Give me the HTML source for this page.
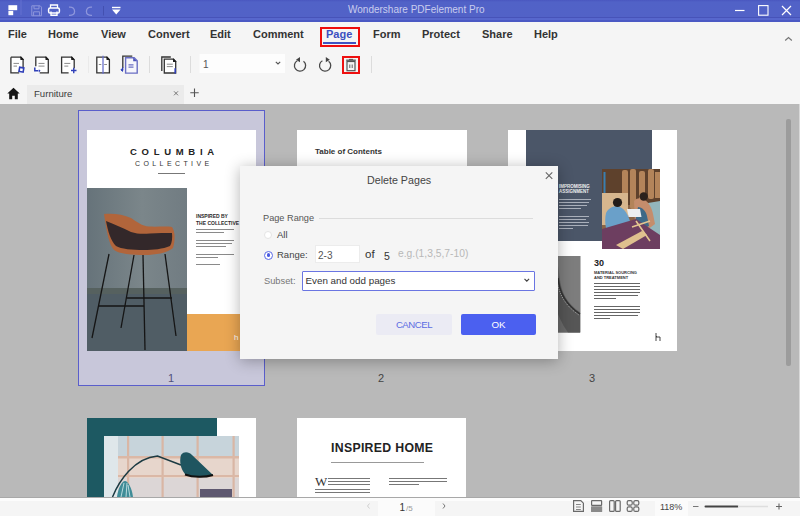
<!DOCTYPE html>
<html><head><meta charset="utf-8">
<style>
*{box-sizing:border-box;margin:0;padding:0}
html,body{width:800px;height:516px;overflow:hidden;background:#f5f5f5;font-family:"Liberation Sans",sans-serif}
.a{position:absolute}
#title{left:0;top:0;width:800px;height:22px;background:linear-gradient(#4a57c0 0,#5162c7 2px,#5262c7 17px,#4753b9 17px,#4753b9 18px,#5767cd 18px,#5767cd 20px,#4b59c4 20px,#4b59c4 21.6px,#f5f5f5 21.6px)}
#menu{left:0;top:22px;width:800px;height:60px;background:#f5f5f5}
.mi{position:absolute;top:28px;font-size:11px;font-weight:bold;color:#333;line-height:12px;white-space:nowrap}
#tabbar{left:0;top:82px;width:800px;height:22px;background:#f5f5f5}
#main{left:0;top:104px;width:800px;height:393px;background:#b9b9b9;overflow:hidden}
#status{left:0;top:497px;width:800px;height:19px;background:#f5f5f5}
.page{position:absolute;background:#fff;overflow:hidden}
.lbl{position:absolute;font-size:11px;color:#444;line-height:12px}
</style></head><body>

<!-- TITLE BAR -->
<div id="title" class="a">
  <div class="a" style="left:348px;top:4px;font-size:10px;color:#c9cdee;line-height:12px;white-space:nowrap">Wondershare PDFelement Pro</div>
  <svg class="a" style="left:0;top:0" width="130" height="22" viewBox="0 0 130 22">
    <rect x="8.4" y="5.2" width="8.8" height="5" fill="#fff"/>
    <rect x="8.4" y="10.9" width="4.8" height="4.3" fill="#fff"/>
    <line x1="21" y1="0" x2="21" y2="15" stroke="#6570d0" stroke-width="1"/>
    <path d="M31.8 5.8h8.4l1.3 1.3v8.7h-9.7z M34 5.8v3h5v-3 M33.6 15.8v-4h6v4" fill="none" stroke="#8e96dc" stroke-width="1"/>
    <path d="M50.5 8v-3h7v3" fill="none" stroke="#fff" stroke-width="1.3"/>
    <rect x="48.6" y="8" width="10.8" height="5" rx="1.6" fill="none" stroke="#fff" stroke-width="1.5"/>
    <path d="M51 11.5v3.8h6v-3.8" fill="none" stroke="#fff" stroke-width="1.4"/>
    <path d="M69 7.2c3.5 -0.5 5.6 1.5 5.6 4.2s-2.1 4.2 -5.6 4" fill="none" stroke="#8e96dc" stroke-width="1.3"/>
    <path d="M92 7.2c-3.5 -0.5 -5.6 1.5 -5.6 4.2s2.1 4.2 5.6 4" fill="none" stroke="#8e96dc" stroke-width="1.3"/>
    <line x1="103.5" y1="6" x2="103.5" y2="15.5" stroke="#4350b0" stroke-width="1"/>
    <rect x="112" y="6.8" width="8.5" height="1.4" fill="#fff"/>
    <path d="M112 9.5h8.5l-4.25 5z" fill="#fff"/>
  </svg>
  <svg class="a" style="left:720px;top:0" width="80" height="22" viewBox="0 0 80 22">
    <line x1="15" y1="10.5" x2="24.5" y2="10.5" stroke="#fff" stroke-width="1.2"/>
    <rect x="38.6" y="5.6" width="9.4" height="9.6" fill="none" stroke="#fff" stroke-width="1.1"/>
    <path d="M62 6l9 9M71 6l-9 9" stroke="#fff" stroke-width="1.2"/>
  </svg>
</div>

<!-- MENU + TOOLBAR -->
<div id="menu" class="a"></div>
<div class="mi" style="left:8px">File</div>
<div class="mi" style="left:48px">Home</div>
<div class="mi" style="left:101px">View</div>
<div class="mi" style="left:148px">Convert</div>
<div class="mi" style="left:210px">Edit</div>
<div class="mi" style="left:253px">Comment</div>
<div class="mi" style="left:326px;color:#3c4fc0">Page</div>
<div class="a" style="left:323px;top:42px;width:33px;height:2px;background:#3f52c2"></div>
<div class="a" style="left:320px;top:27px;width:40px;height:20px;border:2px solid #ee0d0d"></div>
<div class="mi" style="left:373px">Form</div>
<div class="mi" style="left:422px">Protect</div>
<div class="mi" style="left:482px">Share</div>
<div class="mi" style="left:534px">Help</div>

<!-- TOOLBAR ICONS -->
<svg class="a" style="left:0;top:47px" width="380" height="35" viewBox="0 0 380 35">
  <g fill="#fff">
    <rect x="10.9" y="10.2" width="12.2" height="15.7"/>
    <rect x="35.8" y="10.2" width="12.5" height="15.7"/>
    <rect x="61.6" y="10.2" width="12.6" height="15.7"/>
    <rect x="96.8" y="10.2" width="12.6" height="15.7"/>
    <rect x="164.3" y="12.2" width="11.4" height="13.8"/>
  </g>
  <g fill="none" stroke="#333" stroke-width="1.3">
    <!-- icon1 -->
    <path d="M10.9 10.2h9.6l2.6 2.6v8.2 M19.2 25.9h-8.3v-15.7"/>
    <!-- icon2 -->
    <path d="M35.8 19.2v-9h9.8l2.7 2.7v13h-8.6"/>
    <!-- icon3 -->
    <path d="M68.6 25.9h-7v-15.7h9.8l2.8 2.8v8.2"/>
    <!-- icon4 -->
    <path d="M96.8 10.2h9.8l2.8 2.8v12.9h-12.6z"/>
    <!-- icon6 -->
    <path d="M161.8 24v-14h9" />
    <path d="M164.3 12.2h8.8l2.6 2.6v11.2h-11.4z"/>
  </g>
  <g fill="#1e1e1e">
    <path d="M20.4 9.6h0.8l2.6 2.6v0.9h-3.4z"/>
    <path d="M45.5 9.6h0.8l2.6 2.6v0.9h-3.4z"/>
    <path d="M71.2 9.6h0.8l2.6 2.6v0.9h-3.4z"/>
    <path d="M106.5 9.6h0.8l2.6 2.6v0.9h-3.4z"/>
    <path d="M173 11.6h0.8l2.6 2.6v0.9h-3.4z"/>
  </g>
  <g stroke="#8a8a8a" stroke-width="1">
    <path d="M13.5 16.4h5.5M13.5 19.1h3.5"/>
    <path d="M38.5 16.4h6M38.5 19.1h6"/>
    <path d="M64.3 16.4h6M64.3 19.1h4"/>
    <path d="M98.8 17.5h2.5M104.2 17.5h2.8"/>
    <path d="M166.8 17.2h6M166.8 19.6h6"/>
  </g>
  <!-- blue accents -->
  <g fill="none" stroke="#2f3fb8" stroke-width="1.6">
    <rect x="19.3" y="20.6" width="4.2" height="4.2" transform="rotate(10 21.4 22.7)"/>
    <path d="M71 23.5h5.5M73.75 20.8v5.5" stroke-width="1.4"/>
    <path d="M34.8 20.6v3.2h3.6" stroke-width="1.5"/>
  </g>
  <path d="M38.8 22.2l1.8 1.6l-1.8 1.6z" fill="#2f3fb8"/>
  <line x1="103" y1="8.8" x2="103" y2="27" stroke="#6a72cc" stroke-width="1.3"/>
  <!-- icon5 -->
  <path d="M122.8 21v-11.8h9.5" fill="none" stroke="#333" stroke-width="1.3"/>
  <path d="M125.6 10.8h8.6l3 3v12.3h-11.6z" fill="#f6f6fb" stroke="#6a6fc4" stroke-width="1.4"/>
  <path d="M133.2 10.5l3.8 3.8h-3.8z" fill="#4a52b8"/>
  <path d="M128.5 17.8h5M128.5 20.2h5" stroke="#6a6fc4" stroke-width="1.2"/>
  <path d="M122.8 20.5l-1 3.5" stroke="#2f3fb8" stroke-width="1.4"/>
  <path d="M120.3 22.6l2.6 2.4l0.6-3.2z" fill="#2f3fb8"/>
  <!-- icon6 blue 1 -->
  <path d="M175.2 21.2v5.2" stroke="#2f3fb8" stroke-width="1.6"/>
  <!-- separators -->
  <g stroke="#dcdcdc" stroke-width="1">
    <line x1="88.5" y1="9" x2="88.5" y2="26" stroke="#eaeaea"/>
    <line x1="149.5" y1="9" x2="149.5" y2="26"/>
    <line x1="190.5" y1="9" x2="190.5" y2="26"/>
    <line x1="371.5" y1="9" x2="371.5" y2="26"/>
  </g>
  <!-- dropdown -->
  <rect x="199.5" y="7" width="85.5" height="19" fill="#fdfdfd"/>
  <path d="M275.8 14.8l2.2 2.2l2.2-2.2" fill="none" stroke="#555" stroke-width="1.1"/>
  <!-- rotate ccw -->
  <g fill="none" stroke="#4a4a4a" stroke-width="1.3">
    <path d="M297.3 13.7 A5.6 5.6 0 1 0 303.5 14.2"/>
    <path d="M328.6 14.2 A5.6 5.6 0 1 1 322.4 13.7"/>
  </g>
  <path d="M296 12.8l4 -2.8v5.2z" fill="#444"/>
  <path d="M329.8 12.8l-4 -2.8v5.2z" fill="#444"/>
  <!-- delete -->
  <rect x="343" y="10" width="16" height="16" fill="none" stroke="#ee1010" stroke-width="2"/>
  <path d="M346.2 13.2h9.6" stroke="#555" stroke-width="1.3"/>
  <path d="M349 12.4h4" stroke="#555" stroke-width="1"/>
  <rect x="347" y="14.5" width="8" height="9.2" fill="none" stroke="#555" stroke-width="1.2"/>
  <path d="M349.8 17.5v3.5M352.2 17.5v3.5" stroke="#555" stroke-width="0.9"/>
</svg>
<div class="a" style="left:203px;top:58.5px;font-size:10px;color:#555;line-height:12px">1</div>
<svg class="a" style="left:780px;top:34px" width="16" height="10" viewBox="0 0 16 10">
  <path d="M5.2 6.5l3.3-3l3.3 3" fill="none" stroke="#777" stroke-width="1.2"/>
</svg>

<!-- TAB BAR -->
<div id="tabbar" class="a">
  <div class="a" style="left:27px;top:3px;width:157px;height:19px;background:#ebebeb"></div>
  <div class="a" style="left:34px;top:6.3px;font-size:9.6px;color:#3c3c3c;line-height:12px">Furniture</div>
  <svg class="a" style="left:0;top:0" width="210" height="22" viewBox="0 0 210 22">
    <path d="M13.5 5.8L7.3 11.6h1.9v5.6h3v-3.4h2.6v3.4h3v-5.6h1.9z" fill="#141414"/>
    <path d="M174 9.3l4 4M178 9.3l-4 4" stroke="#777" stroke-width="1"/>
    <path d="M194.5 6.6v8.4M190.3 10.8h8.4" stroke="#555" stroke-width="1.1"/>
  </svg>
</div>

<!-- MAIN -->
<div id="main" class="a">
  <div class="a" style="left:78px;top:6px;width:187px;height:276px;background:#c8c7da;border:1px solid #5a5ecb"></div>
  <div class="lbl" style="left:168px;top:268px;color:#50507a">1</div>
  <div class="lbl" style="left:378px;top:268px">2</div>
  <div class="lbl" style="left:589px;top:268px">3</div>
  <div class="a" style="left:786px;top:15px;width:4.5px;height:247px;background:#9c9c9c;border-radius:2px"></div>
  <div class="a" style="left:799px;top:0;width:1px;height:393px;background:#d8d8d8"></div>
</div>

<!-- PAGE 1 -->
<div class="page" style="left:87px;top:130px;width:169px;height:221px">
  <div class="a" style="left:43px;top:16px;font-size:9.5px;font-weight:bold;letter-spacing:4.7px;color:#222;line-height:11px;white-space:nowrap">COLUMBIA</div>
  <div class="a" style="left:48px;top:30px;font-size:7px;letter-spacing:3.4px;color:#333;line-height:8px;white-space:nowrap">COLLECTIVE</div>
  <div class="a" style="left:71px;top:42.5px;width:27px;height:1.6px;background:#777"></div>
  <svg class="a" style="left:0;top:58px" width="100" height="164" viewBox="0 0 100 164">
    <defs>
      <linearGradient id="wall" x1="0" y1="0" x2="1" y2="0">
        <stop offset="0" stop-color="#66737a"/><stop offset="0.55" stop-color="#7b868a"/><stop offset="1" stop-color="#717c82"/>
      </linearGradient>
    </defs>
    <rect x="0" y="0" width="100" height="164" fill="url(#wall)"/>
    <rect x="0" y="102" width="100" height="62" fill="#505d65"/>
    <rect x="0" y="100" width="100" height="6" fill="#56615f"/>
    <!-- chair shell -->
    <path d="M17 26C25 25 36 26 44 30C50 34 55 38 62 38.5C70 39 80 38 85 39C88 43 88.5 52 86 60C80 65 68 67 58 67C45 67 32 66 27 62C22 56 20 46 17 26z" fill="#b1653b"/>
    <path d="M19 33C27 36 36 40 44 44C50 46 56 46 63 45.5C71 45 79 45 85 45C85.5 50 85 55 83 58C76 61 66 62 57 62C45 62 34 61 29 58C24 53 21 44 19 33z" fill="#33282a"/>
    <!-- legs -->
    <g stroke="#151515" stroke-width="1.3" fill="none">
      <path d="M22 66L5 150"/>
      <path d="M47 67L34 140"/>
      <path d="M56 67L58 162"/>
      <path d="M78 66L89 148"/>
      <path d="M12 118H57"/>
      <path d="M40 110H85"/>
    </g>
  </svg>
  <div class="a" style="left:109px;top:83px;font-size:5px;font-weight:bold;color:#2a2a2a;line-height:7px;white-space:nowrap">INSPIRED BY<br>THE COLLECTIVE</div>
  <div class="a" style="left:109px;top:99px;width:38px;height:1px;background:#8a8a8a"></div>
  <div class="a" style="left:109px;top:102px;width:28px;height:1px;background:#8a8a8a"></div>
  <div class="a" style="left:109px;top:110px;width:38px;height:1px;background:#8a8a8a"></div>
  <div class="a" style="left:109px;top:113px;width:36px;height:1px;background:#8a8a8a"></div>
  <div class="a" style="left:109px;top:116px;width:30px;height:1px;background:#8a8a8a"></div>
  <div class="a" style="left:109px;top:124px;width:38px;height:1px;background:#8a8a8a"></div>
  <div class="a" style="left:109px;top:127px;width:22px;height:1px;background:#8a8a8a"></div>
  <div class="a" style="left:109px;top:134px;width:24px;height:1px;background:#8a8a8a"></div>
  <div class="a" style="left:100px;top:184px;width:69px;height:37px;background:#e9a653"></div>
  <div class="a" style="left:147px;top:203px;font-size:8px;color:#fff;line-height:9px">h</div>
</div>

<!-- PAGE 2 -->
<div class="page" style="left:297px;top:130px;width:170px;height:221px">
  <div class="a" style="left:18px;top:16.5px;font-size:8px;font-weight:bold;color:#333;line-height:10px;white-space:nowrap">Table of Contents</div>
</div>

<!-- PAGE 3 -->
<div class="page" style="left:508px;top:130px;width:169px;height:221px">
  <div class="a" style="left:18px;top:0;width:125.5px;height:110.5px;background:#4b5668"></div>
  <div class="a" style="left:51px;top:54px;font-size:4.5px;font-weight:bold;color:#f0f0f0;line-height:5px;white-space:nowrap">IMPROMISING<br>ASSIGNMENT</div>
  <div class="a" style="left:51px;top:69px;width:32px;height:1px;background:#aab0bb"></div>
  <div class="a" style="left:51px;top:72px;width:30px;height:1px;background:#aab0bb"></div>
  <div class="a" style="left:51px;top:75px;width:28px;height:1px;background:#aab0bb"></div>
  <div class="a" style="left:51px;top:78px;width:22px;height:1px;background:#aab0bb"></div>
  <div class="a" style="left:51px;top:86px;width:30px;height:1px;background:#aab0bb"></div>
  <div class="a" style="left:51px;top:89px;width:27px;height:1px;background:#aab0bb"></div>
  <div class="a" style="left:51px;top:92px;width:30px;height:1px;background:#aab0bb"></div>
  <div class="a" style="left:51px;top:95px;width:29px;height:1px;background:#aab0bb"></div>
  <div class="a" style="left:51px;top:98px;width:14px;height:1px;background:#aab0bb"></div>
  <svg class="a" style="left:93.5px;top:38.7px" width="58.5" height="80.5" viewBox="0 0 58.5 80.5">
    <rect width="58.5" height="80.5" rx="2.5" fill="#8a6446"/>
    <rect x="0" y="0" width="58.5" height="36" fill="#5e412c"/>
    <g fill="#b3845a"><rect x="20" y="1" width="6" height="34" rx="2"/><rect x="28" y="0" width="6" height="40" rx="2"/><rect x="37" y="2" width="6" height="34" rx="2"/><rect x="46" y="0" width="6" height="30" rx="2"/><rect x="53" y="3" width="5" height="26"/></g>
    <rect x="1.5" y="3" width="2" height="24" fill="#3a7fb0"/>
    <path d="M0 24h26v32h-26z" fill="#d6b68e"/>
    <path d="M34 36l24-4v46h-24z" fill="#93b6bc"/>
    <path d="M32 32c2-3 7-4 11-1c4 3 7 8 8 14l2 10l-8 6l-12-6z" fill="#c48d6c"/>
    <path d="M36 38c4 0 8 4 9 9l2 10l-8 4l-6-8z" fill="#3e6987"/>
    <circle cx="41.7" cy="27.5" r="4.2" fill="#2a211c"/>
    <path d="M4 44c3-6 9-8 14-6c5 2 8 8 10 14l4 10l-8 6l-16 2c-4-7-6-17-4-26z" fill="#6aa0c9"/>
    <circle cx="15.5" cy="33.5" r="4.6" fill="#231c18"/>
    <path d="M25 40h13l1.5 8h-13z" fill="#eceef0"/>
    <path d="M0 60l34-10l24 16v14.5h-58z" fill="#6d3e60"/>
    <path d="M14 76l26-14l5 4l-24 14z" fill="#dfc08e"/>
    <path d="M34 52l14 20M30 58l18-6" stroke="#e3c590" stroke-width="1.6"/>
  </svg>
  <svg class="a" style="left:18px;top:126px" width="54.5" height="76.5" viewBox="0 0 54.5 76.5">
    <rect width="54.5" height="76.5" fill="#7d7d7d"/>
    <path d="M0 0h30c2 8 3 16 4 24c2 14 8 24 20 32v20.5h-54z" fill="#6a6a6a"/>
    <path d="M33 20c1 14 6 26 21 38v18.5h-12c-6-8-10-18-14-28z" fill="#4a4a4a" opacity="0.6"/>
    <path d="M32 22c1 14 7 26 22 36" fill="none" stroke="#333" stroke-width="1.6"/>
    <path d="M31 22c1 14 7 27 22 37" fill="none" stroke="#d0d0d0" stroke-width="0.7" stroke-dasharray="1 1.2"/>
  </svg>
  <div class="a" style="left:86px;top:128px;font-size:9px;font-weight:bold;color:#222;line-height:10px">30</div>
  <div class="a" style="left:86px;top:140px;font-size:4px;font-weight:bold;color:#333;line-height:5px;white-space:nowrap">MATERIAL SOURCING<br>AND TREATMENT</div>
  <div class="a" style="left:86px;top:153px;width:46px;height:1px;background:#666"></div>
  <div class="a" style="left:86px;top:156px;width:46px;height:1px;background:#666"></div>
  <div class="a" style="left:86px;top:159px;width:46px;height:1px;background:#666"></div>
  <div class="a" style="left:86px;top:162px;width:46px;height:1px;background:#666"></div>
  <div class="a" style="left:86px;top:165px;width:44px;height:1px;background:#666"></div>
  <div class="a" style="left:86px;top:168px;width:22px;height:1px;background:#666"></div>
  <div class="a" style="left:86px;top:176px;width:46px;height:1px;background:#666"></div>
  <div class="a" style="left:86px;top:179px;width:46px;height:1px;background:#666"></div>
  <div class="a" style="left:86px;top:182px;width:46px;height:1px;background:#666"></div>
  <div class="a" style="left:86px;top:185px;width:44px;height:1px;background:#666"></div>
  <div class="a" style="left:86px;top:188px;width:16px;height:1px;background:#666"></div>
  <svg class="a" style="left:146px;top:202px" width="8" height="10" viewBox="0 0 8 10"><path d="M2 1v8M2 5h4v4M2 5l1-1" fill="none" stroke="#333" stroke-width="0.9"/></svg>
</div>

<!-- PAGE 4 -->
<div class="page" style="left:87px;top:418px;width:169px;height:79px">
  <div class="a" style="left:0;top:0;width:130px;height:18px;background:#1d5962"></div>
  <div class="a" style="left:0;top:0;width:17px;height:79px;background:#1d5962"></div>
  <svg class="a" style="left:17px;top:18px" width="135" height="61" viewBox="0 0 135 61">
    <rect width="135" height="61" fill="#e7d6cc"/>
    <rect x="0" y="0" width="14" height="61" fill="#dfe7ea"/>
    <rect x="14" y="0" width="121" height="20" fill="#c7d4db"/>
    <rect x="14" y="42" width="121" height="19" fill="#dcd6d6"/>
    <g fill="#d9b6a4"><rect x="23" y="0" width="2.2" height="61"/><rect x="57.5" y="0" width="2.2" height="61"/><rect x="92.5" y="0" width="2.2" height="61"/><rect x="128.5" y="0" width="2.2" height="61"/></g>
    <rect x="14" y="20" width="121" height="2.5" fill="#dbb8a6"/>
    <rect x="14" y="39" width="121" height="2" fill="#dbb8a6"/>
    <rect x="96" y="53" width="32" height="8" fill="#5e5870"/>
    <path d="M8.5 61C15 45 30 22 53.5 20L77 29" fill="none" stroke="#1b3a42" stroke-width="1.5"/>
    <path d="M77 19c3-4 8-3 11 0l21 20c-8 3-20 3-28-1c-4-5-6-12-4-19z" fill="#1f5560"/>
    <path d="M81 38.5c8 3 20 3 28 0.5" stroke="#111" stroke-width="2" fill="none"/>
    <path d="M13 61c1-9 5-16 8-16c3 0 7 7 8 16z" fill="#3f8c97"/>
    <path d="M17 61l3-14M22 61l1-14M26 61l-2-12" stroke="#d8eef0" stroke-width="0.8"/>
  </svg>
</div>

<!-- PAGE 5 -->
<div class="page" style="left:297px;top:418px;width:169px;height:79px">
  <div class="a" style="left:34px;top:23px;font-size:12.3px;font-weight:bold;letter-spacing:0.3px;color:#222;line-height:14px;white-space:nowrap">INSPIRED HOME</div>
  <div class="a" style="left:34px;top:43.5px;width:93px;height:1.2px;background:#999"></div>
  <div class="a" style="left:18px;top:57px;font-family:'Liberation Serif',serif;font-size:13px;color:#333;line-height:13px">W</div>
  <div class="a" style="left:31px;top:60px;width:42px;height:1.1px;background:#777"></div>
  <div class="a" style="left:31px;top:63px;width:42px;height:1.1px;background:#777"></div>
  <div class="a" style="left:31px;top:66px;width:42px;height:1.1px;background:#777"></div>
  <div class="a" style="left:18px;top:71px;width:55px;height:1.1px;background:#777"></div>
  <div class="a" style="left:18px;top:74px;width:55px;height:1.1px;background:#777"></div>
  <div class="a" style="left:92px;top:60px;width:58px;height:1.1px;background:#777"></div>
  <div class="a" style="left:92px;top:63px;width:58px;height:1.1px;background:#777"></div>
  <div class="a" style="left:92px;top:66px;width:30px;height:1.1px;background:#777"></div>
</div>

<!-- DIALOG -->
<div class="a" style="left:240px;top:166px;width:318px;height:193px;background:#f5f5f5;box-shadow:0 2px 14px rgba(0,0,0,.3)">
  <div class="a" style="left:127px;top:7px;font-size:10.7px;color:#444;line-height:14px;white-space:nowrap">Delete Pages</div>
  <svg class="a" style="left:303px;top:4px" width="12" height="12" viewBox="0 0 12 12"><path d="M2.8 2.3l6.5 6.5M9.3 2.3l-6.5 6.5" stroke="#666" stroke-width="1.1"/></svg>
  <div class="a" style="left:23px;top:46px;font-size:9.2px;color:#555;line-height:12px;white-space:nowrap">Page Range</div>
  <div class="a" style="left:79px;top:52px;width:214px;height:1px;background:#dcdcdc"></div>
  <div class="a" style="left:24px;top:65px;width:8px;height:8px;border-radius:50%;background:#fff;border:1px solid #e4e4e4"></div>
  <div class="a" style="left:37px;top:63px;font-size:9.5px;color:#444;line-height:12px">All</div>
  <div class="a" style="left:24px;top:84.5px;width:9px;height:9px;border-radius:50%;background:#fff;border:1.3px solid #5a6ae6"></div>
  <div class="a" style="left:26.8px;top:87.3px;width:3.4px;height:3.4px;border-radius:50%;background:#4a5ae0"></div>
  <div class="a" style="left:37px;top:83px;font-size:9.5px;color:#444;line-height:12px">Range:</div>
  <div class="a" style="left:75px;top:78.5px;width:45px;height:18px;background:#fff;border:1px solid #ececec"></div>
  <div class="a" style="left:78px;top:84px;font-size:10px;color:#555;line-height:12px">2-3</div>
  <div class="a" style="left:125px;top:80.5px;font-size:11.5px;color:#333;line-height:14px">of</div>
  <div class="a" style="left:144px;top:83.5px;font-size:10.5px;color:#333;line-height:13px">5</div>
  <div class="a" style="left:158px;top:82px;font-size:10.3px;color:#b8b8b8;line-height:12px;white-space:nowrap">e.g.(1,3,5,7-10)</div>
  <div class="a" style="left:24px;top:109px;font-size:9.3px;color:#777;line-height:12px">Subset:</div>
  <div class="a" style="left:62px;top:105px;width:233px;height:20px;background:#fff;border:1px solid #6a75e2;border-radius:1px"></div>
  <div class="a" style="left:65.5px;top:109px;font-size:9.8px;color:#333;line-height:12px;white-space:nowrap">Even and odd pages</div>
  <svg class="a" style="left:282px;top:110px" width="10" height="8" viewBox="0 0 10 8"><path d="M2.5 2.8l2.3 2.3l2.3-2.3" fill="none" stroke="#444" stroke-width="1.2"/></svg>
  <div class="a" style="left:136px;top:148px;width:76px;height:21px;background:#ebebf4;color:#5b6be3;font-size:9.6px;line-height:21px;text-align:center;letter-spacing:-0.45px;border-radius:2px">CANCEL</div>
  <div class="a" style="left:221px;top:148px;width:75px;height:21px;background:#4b60f0;color:#fff;font-size:9.8px;line-height:21px;text-align:center;border-radius:2px">OK</div>
</div>

<!-- STATUS -->
<div id="status" class="a">
  <div class="a" style="left:0;top:0;width:800px;height:1px;background:#a8a8a8"></div>
  <div class="a" style="left:0;top:1px;width:800px;height:3px;background:#fcfcfc"></div>
  <div class="a" style="left:378px;top:3px;width:57px;height:16px;background:#fbfbfb"></div>
  <div class="a" style="left:399.5px;top:5px;font-size:10px;color:#333;line-height:12px">1</div>
  <div class="a" style="left:406px;top:6px;font-size:8px;color:#999;line-height:11px">/5</div>
  <div class="a" style="left:655px;top:3px;width:33px;height:16px;background:#fbfbfb"></div>
  <div class="a" style="left:660px;top:4.5px;font-size:9px;color:#444;line-height:11px">118%</div>
  <svg class="a" style="left:0;top:0" width="800" height="19" viewBox="0 0 800 19">
    <path d="M369.5 6.5l-2 2.5l2 2.5" fill="none" stroke="#cfcfcf" stroke-width="1"/>
    <path d="M443 6.5l2 2.5l-2 2.5" fill="none" stroke="#777" stroke-width="1"/>
    <g fill="none" stroke="#6a6a6a" stroke-width="1.2">
      <path d="M573.6 3.6h7.2l2.6 2.6v8.2h-9.8z"/>
      <path d="M576 7.5h4.8M576 10h4.8M576 12.5h4.8" stroke-width="0.8"/>
      <rect x="591.6" y="3.6" width="10" height="4.8" rx="0.5"/>
      <rect x="609.6" y="3.6" width="4.6" height="10.8" rx="1"/>
      <rect x="615.6" y="3.6" width="4.6" height="10.8" rx="1"/>
      <rect x="627.2" y="3.6" width="5" height="4.6" rx="1.5"/>
      <rect x="633.8" y="3.6" width="5" height="4.6" rx="1.5"/>
      <rect x="627.2" y="9.8" width="5" height="4.6" rx="1.5"/>
      <rect x="633.8" y="9.8" width="5" height="4.6" rx="1.5"/>
    </g>
    <rect x="591" y="9.2" width="11.2" height="5.8" rx="0.5" fill="#8a8a8a"/>
    <path d="M693 9.5h5.5" stroke="#777" stroke-width="1"/>
    <path d="M705.5 9.5h32" stroke="#444" stroke-width="2" stroke-linecap="round"/>
    <path d="M738 9.5h30" stroke="#dedede" stroke-width="1.5"/>
    <path d="M776 9.5h6M779 6.5v6" stroke="#666" stroke-width="1.1"/>
  </svg>
</div>

</body></html>
